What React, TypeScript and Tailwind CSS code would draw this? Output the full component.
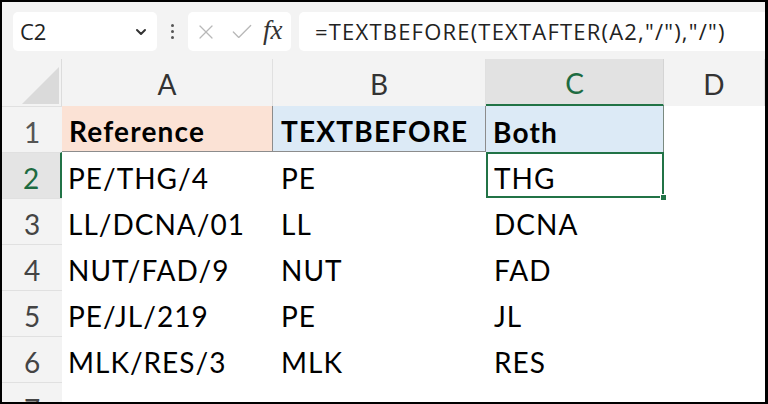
import { ChevronDown, X, Check } from 'lucide-react';

const rows = [
    { n: 2, a: 'PE/THG/4', b: 'PE', c: 'THG' },
    { n: 3, a: 'LL/DCNA/01', b: 'LL', c: 'DCNA' },
    { n: 4, a: 'NUT/FAD/9', b: 'NUT', c: 'FAD' },
    { n: 5, a: 'PE/JL/219', b: 'PE', c: 'JL' },
    { n: 6, a: 'MLK/RES/3', b: 'MLK', c: 'RES' },
];

const cell = 'h-[46px] flex items-center pt-[5px] text-[28px] tracking-[1px] text-black leading-none';
const head = 'h-[46px] flex items-center pt-[5px] text-[28px] tracking-[1.2px] font-bold text-black leading-none';

export default function App() {
    return (
        <div className="w-[768px] h-[404px] overflow-hidden border-2 border-r-[3px] border-black bg-[#f3f3f3] flex flex-col font-[Lato,sans-serif]">
            {/* formula bar */}
            <div className="h-[3px] bg-[#e4e4e4]" />
            <div className="flex items-center pt-[10px] pb-[8px] pl-[11px]">
                <div className="w-[144px] h-[39px] bg-white rounded-[5px] flex items-center justify-between pl-[7px] pr-[8px] font-['Open_Sans',sans-serif] text-[22px] text-[#222]">
                    <span>C2</span>
                    <ChevronDown className="w-4 h-4 text-[#333]" strokeWidth={3} />
                </div>
                <div className="w-[31px] flex flex-col items-center gap-[3px]">
                    <span className="w-[3px] h-[3px] rounded-full bg-[#555]" />
                    <span className="w-[3px] h-[3px] rounded-full bg-[#555]" />
                    <span className="w-[3px] h-[3px] rounded-full bg-[#555]" />
                </div>
                <div className="w-[103px] h-[39px] bg-white rounded-[5px] flex items-center pl-[6px] gap-[11px] text-[#b8b8b8]">
                    <X className="w-[24px] h-[24px]" strokeWidth={1.2} />
                    <Check className="w-[26px] h-[26px]" strokeWidth={1.2} />
                    <span className="font-['Liberation_Serif',serif] italic text-[27px] leading-none text-[#333] -ml-[3px] -mt-[3px]">fx</span>
                </div>
                <div className="ml-[8px] flex-1 h-[39px] bg-white rounded-l-[5px] flex items-center pl-[16px] font-['Open_Sans',sans-serif] text-[22px] tracking-[1.2px] text-[#222]">
                    =TEXTBEFORE(TEXTAFTER(A2,"/"),"/")
                </div>
            </div>

            {/* grid */}
            <div className="grid grid-cols-[60px_211px_213px_178px_1fr] bg-white flex-1">
                {/* column headers */}
                <div className="h-[47px] bg-[#f3f3f3] border-r border-[#dcdcdc] relative">
                    <svg className="absolute right-[2px] bottom-[2px]" width="37" height="37" viewBox="0 0 37 37">
                        <polygon points="37,0 37,37 0,37" fill="#dadada" />
                    </svg>
                </div>
                {['A', 'B', 'C', 'D'].map((l) => (
                    <div
                        key={l}
                        className={
                            l === 'C'
                                ? 'h-[47px] flex items-center justify-center text-[28px] text-[#1d6b41] bg-[#e2e2e2] border-b-2 border-[#217346] border-r border-r-[#d4d4d4] pt-[3px]'
                                : 'h-[47px] flex items-center justify-center text-[28px] text-[#333] bg-[#f3f3f3] border-r border-[#e0e0e0] pt-[3px]'
                        }
                    >
                        {l}
                    </div>
                ))}

                {/* row 1 */}
                <div className="h-[46px] flex items-center justify-center text-[28px] text-[#555] bg-[#f3f3f3] border-t border-[#e0e0e0] pt-[5px]">1</div>
                <div className={`${head} pl-[7px] bg-[#fbe2d5] border-r border-b border-[#8c8c8c]`}>Reference</div>
                <div className={`${head} pl-[8px] bg-[#dceaf6] border-r border-b border-[#8c8c8c]`}>TEXTBEFORE</div>
                <div className={`${head} pl-[7px] bg-[#dceaf6] border-r border-[#7a8a80]`}>Both</div>
                <div className="h-[46px] bg-white" />

                {rows.map((r) => (
                    <div key={r.n} className="contents">
                        <div
                            className={
                                r.n === 2
                                    ? 'h-[46px] flex items-center justify-center text-[28px] text-[#1d6b41] bg-[#e4e4e4] border-r-2 border-[#217346] border-t border-t-[#e0e0e0] pt-[5px]'
                                    : 'h-[46px] flex items-center justify-center text-[28px] text-[#444] bg-[#f3f3f3] border-t border-[#e0e0e0] pt-[5px]'
                            }
                        >
                            {r.n}
                        </div>
                        <div className={`${cell} pl-[6px]`}>{r.a}</div>
                        <div className={`${cell} pl-[8px]`}>{r.b}</div>
                        <div
                            className={
                                r.n === 2
                                    ? `${cell} pl-[6px] border-2 border-[#217346] relative`
                                    : `${cell} pl-[8px]`
                            }
                        >
                            {r.c}
                            {r.n === 2 && (
                                <span className="absolute -right-[5px] -bottom-[5px] w-[7px] h-[7px] bg-[#217346] border border-white" />
                            )}
                        </div>
                        <div className="h-[46px]" />
                    </div>
                ))}

                <div className="h-[46px] flex items-start justify-center text-[28px] text-[#444] bg-[#f3f3f3] border-t border-[#e0e0e0] pt-[5px]">7</div>
                <div />
                <div />
                <div />
                <div />
            </div>
        </div>
    );
}
